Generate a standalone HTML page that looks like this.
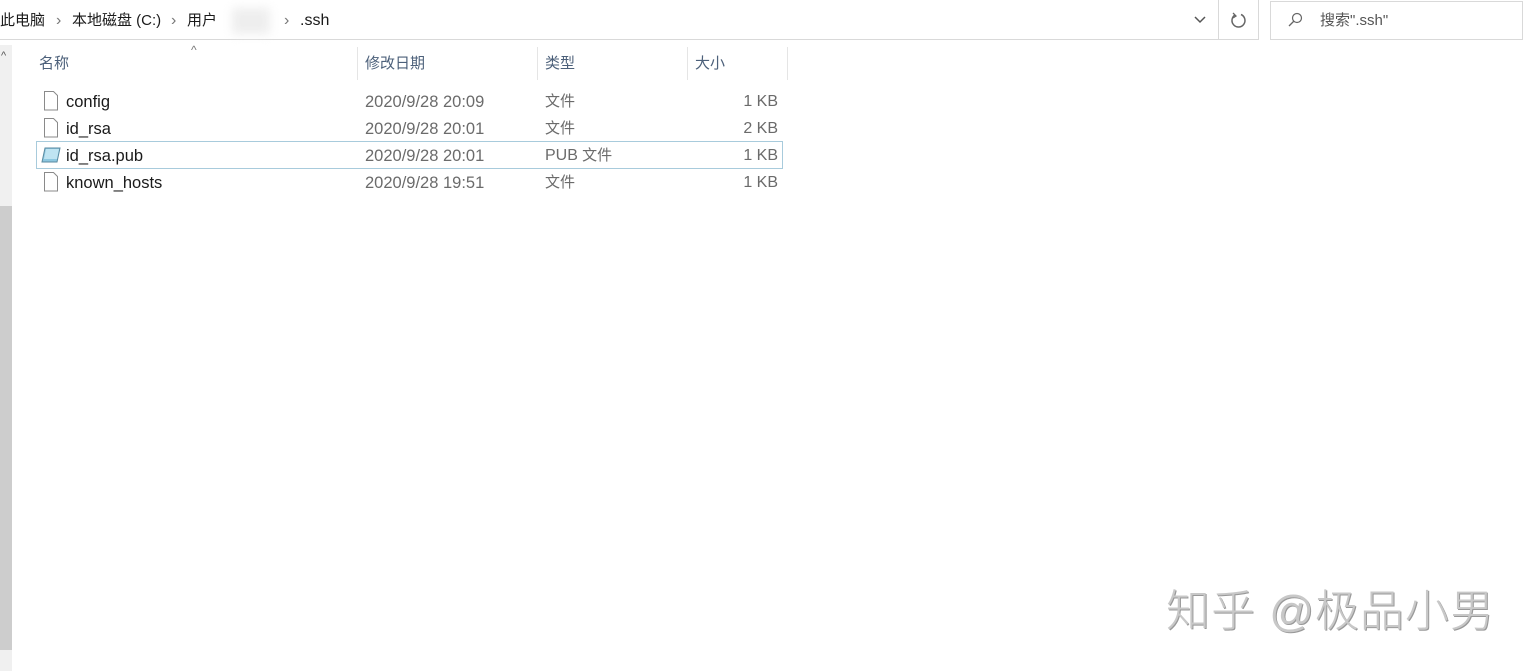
<!DOCTYPE html>
<html><head><meta charset="utf-8"><style>
body{margin:0;width:1535px;height:671px;background:#fff;position:relative;overflow:hidden;font-family:"Liberation Sans","Noto Sans CJK SC",sans-serif;font-size:16px;color:#1a1a1a}
.a{position:absolute;white-space:nowrap;line-height:20px}
.g{color:#6b6b6b}
.h{color:#4c607a}
.c{font-size:15px}
</style></head><body>
<div class="a" style="left:-1px;top:0;width:1258px;height:39px;border:1px solid #d9d9d9;border-top:none"></div>
<div class="a" style="left:1218px;top:0;width:1px;height:39px;background:#d9d9d9"></div>
<div class="a c" style="left:0;top:11px">此电脑</div>
<div class="a" style="left:56px;top:11px;color:#777">›</div>
<div class="a c" style="left:72px;top:11px">本地磁盘 (C:)</div>
<div class="a" style="left:171px;top:11px;color:#777">›</div>
<div class="a c" style="left:187px;top:11px">用户</div>
<div class="a" style="left:232px;top:8px;width:38px;height:26px;background:#eee;filter:blur(5px)"></div>
<div class="a" style="left:284px;top:11px;color:#777">›</div>
<div class="a" style="left:300px;top:11px">.ssh</div>
<svg class="a" style="left:1193px;top:15px" width="14" height="10"><path d="M2 2l5 5 5-5" fill="none" stroke="#555" stroke-width="1.5"/></svg>
<svg class="a" style="left:1230px;top:11px" width="18" height="18"><path d="M5 4A6.5 6.5 0 1 0 11 3.5" fill="none" stroke="#666" stroke-width="1.5"/><path d="M3 2l3 3-3 2" fill="none" stroke="#666" stroke-width="1.3"/></svg>
<div class="a" style="left:1270px;top:1px;width:251px;height:37px;border:1px solid #d9d9d9"></div>
<svg class="a" style="left:1286px;top:11px" width="18" height="18"><circle cx="11" cy="7" r="4.5" fill="none" stroke="#666" stroke-width="1.2"/><path d="M8 10l-5 5" stroke="#666" stroke-width="1.3"/></svg>
<div class="a c" style="left:1320px;top:11px;color:#555">搜索".ssh"</div>

<div class="a" style="left:0;top:45px;width:12px;height:626px;background:#f0f0f0"></div>
<div class="a" style="left:0;top:206px;width:12px;height:444px;background:#cdcdcd"></div>
<div class="a" style="left:1px;top:46px;font-size:11px;color:#555">^</div>

<div class="a" style="left:191px;top:40px;font-size:12px;color:#777">^</div>
<div class="a" style="left:357px;top:47px;width:1px;height:33px;background:#e5e5e5"></div>
<div class="a" style="left:537px;top:47px;width:1px;height:33px;background:#e5e5e5"></div>
<div class="a" style="left:687px;top:47px;width:1px;height:33px;background:#e5e5e5"></div>
<div class="a" style="left:787px;top:47px;width:1px;height:33px;background:#e5e5e5"></div>
<div class="a h c" style="left:39px;top:54px">名称</div>
<div class="a h c" style="left:365px;top:54px">修改日期</div>
<div class="a h c" style="left:545px;top:54px">类型</div>
<div class="a h c" style="left:695px;top:54px">大小</div>

<div class="a" style="left:36px;top:141px;width:745px;height:26px;border:1px solid #a8cbdc"></div>

<svg class="a" style="left:43px;top:91px" width="16" height="20"><path d="M1.5 .5h9l4 4v14.5h-13z" fill="#fff" stroke="#8a8a8a"/></svg>
<svg class="a" style="left:43px;top:118px" width="16" height="20"><path d="M1.5 .5h9l4 4v14.5h-13z" fill="#fff" stroke="#8a8a8a"/></svg>
<svg class="a" style="left:40px;top:146px" width="22" height="18"><path d="M5 2h15l-3 14H2z" fill="#8cc7e0" stroke="#5a8aa0"/><path d="M6 3h13l-2 10H4z" fill="#bfe4f2"/></svg>
<svg class="a" style="left:43px;top:172px" width="16" height="20"><path d="M1.5 .5h9l4 4v14.5h-13z" fill="#fff" stroke="#8a8a8a"/></svg>

<div class="a" style="left:66px;top:92px;font-size:16.5px">config</div>
<div class="a" style="left:66px;top:119px;font-size:16.5px">id_rsa</div>
<div class="a" style="left:66px;top:146px;font-size:16.5px">id_rsa.pub</div>
<div class="a" style="left:66px;top:173px;font-size:16.5px">known_hosts</div>

<div class="a g" style="left:365px;top:92px;font-size:16.5px">2020/9/28 20:09</div>
<div class="a g" style="left:365px;top:119px;font-size:16.5px">2020/9/28 20:01</div>
<div class="a g" style="left:365px;top:146px;font-size:16.5px">2020/9/28 20:01</div>
<div class="a g" style="left:365px;top:173px;font-size:16.5px">2020/9/28 19:51</div>
<div class="a g c" style="left:545px;top:92px">文件</div>
<div class="a g c" style="left:545px;top:119px">文件</div>
<div class="a g c" style="left:545px;top:146px"><span style="font-size:16px">PUB</span> 文件</div>
<div class="a g c" style="left:545px;top:173px">文件</div>
<div class="a g" style="left:700px;top:92px;width:78px;text-align:right">1 KB</div>
<div class="a g" style="left:700px;top:119px;width:78px;text-align:right">2 KB</div>
<div class="a g" style="left:700px;top:146px;width:78px;text-align:right">1 KB</div>
<div class="a g" style="left:700px;top:173px;width:78px;text-align:right">1 KB</div>

<div class="a" style="left:1166px;top:589px;line-height:46px;font-size:44px;font-weight:300;color:#c8c8c8;text-shadow:1px 1px 0 #999;letter-spacing:1px">知乎 @极品小男</div>
</body></html>
